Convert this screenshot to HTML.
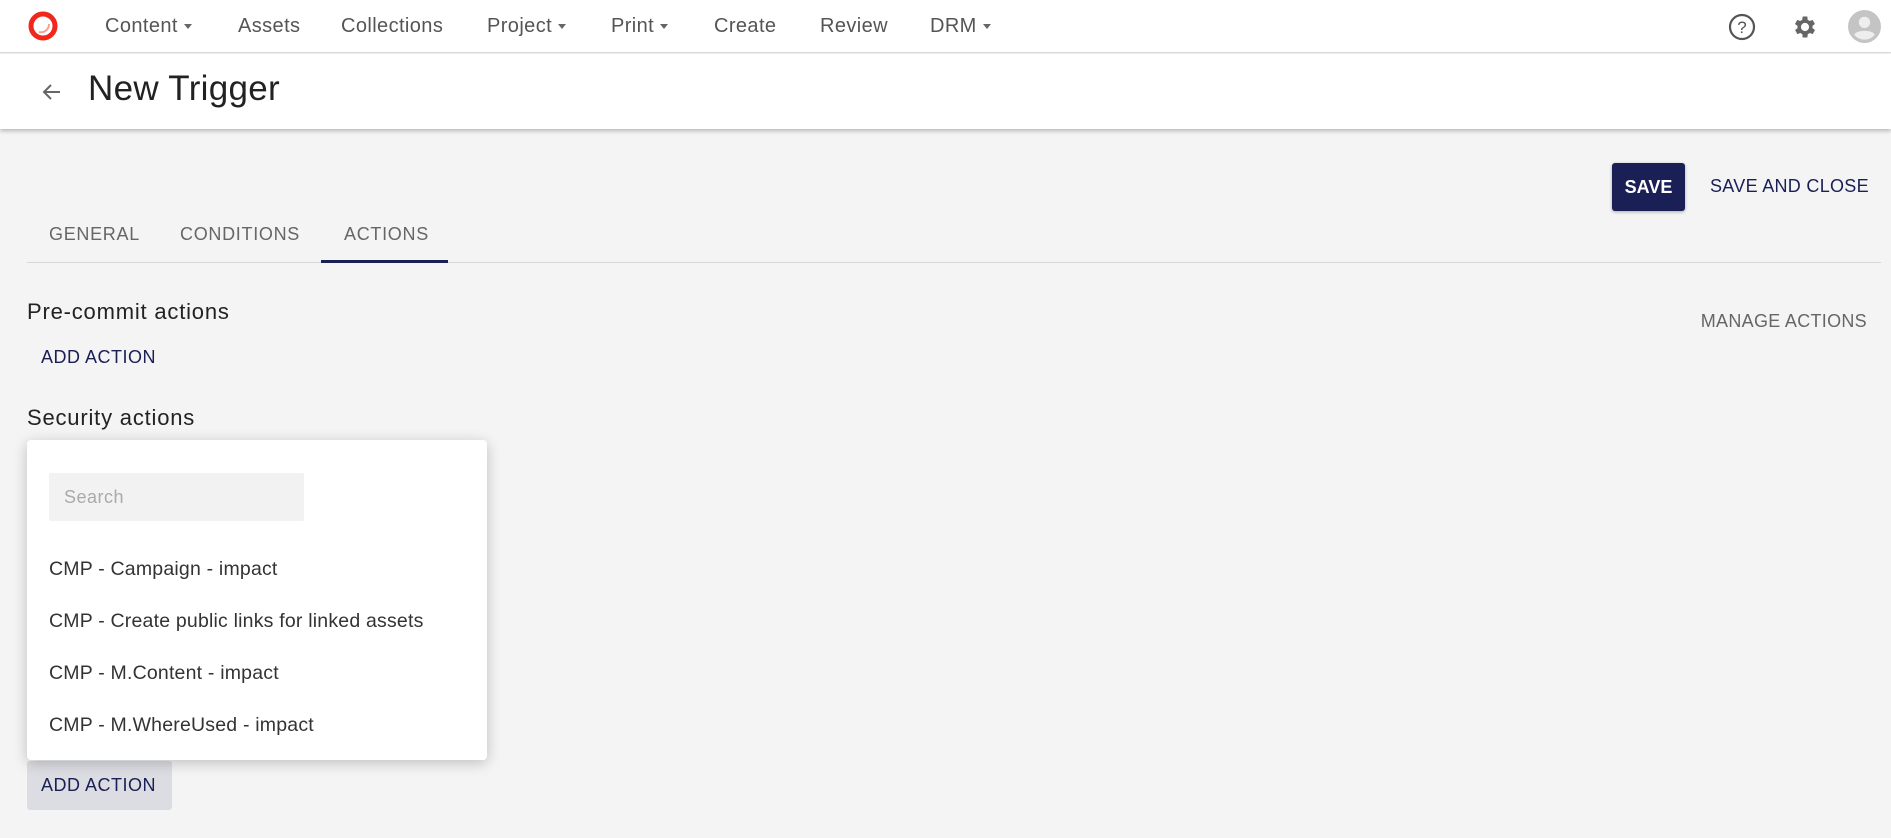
<!DOCTYPE html>
<html><head><meta charset="utf-8"><style>
*{box-sizing:border-box;margin:0;padding:0}
body{width:1891px;height:838px;background:#f4f4f4;font-family:"Liberation Sans",sans-serif;position:relative;overflow:hidden}
.abs{position:absolute;white-space:nowrap}
.nav{position:absolute;left:0;top:0;width:1891px;height:53px;background:#fff;border-bottom:1px solid #dcdcdc}
.nav .it{position:absolute;top:15px;font-size:20px;color:#555;letter-spacing:.4px}
.caret{display:inline-block;width:0;height:0;border-left:4px solid transparent;border-right:4px solid transparent;border-top:5px solid #666;margin-left:6px;vertical-align:middle}
.hdr{position:absolute;left:0;top:54px;width:1891px;height:75px;background:#fff;box-shadow:0 2px 4px rgba(0,0,0,.25)}
.navy{color:#1a1f55}
.tab{position:absolute;top:224px;font-size:18px;color:#666;letter-spacing:.7px}
.dd{position:absolute;left:27px;top:440px;width:460px;height:320px;background:#fff;border-radius:4px;box-shadow:0 3px 14px rgba(0,0,0,.22)}
.item{position:absolute;left:22px;font-size:19.5px;color:#333;letter-spacing:.2px}
.h2{position:absolute;left:27px;font-size:22px;color:#222;letter-spacing:.8px}
</style></head><body>
<div class="nav">
<svg class="abs" style="left:27px;top:10px" width="32" height="32" viewBox="0 0 32 32"><circle cx="16" cy="16" r="12" fill="none" stroke="#f2271b" stroke-width="5"/><path d="M12 22a8 8 0 0 0 10-8" stroke="#f7a09a" stroke-width="2" fill="none"/></svg>
<div class="it" style="left:105px">Content<span class="caret"></span></div>
<div class="it" style="left:238px">Assets</div>
<div class="it" style="left:341px">Collections</div>
<div class="it" style="left:487px">Project<span class="caret"></span></div>
<div class="it" style="left:611px">Print<span class="caret"></span></div>
<div class="it" style="left:714px">Create</div>
<div class="it" style="left:820px">Review</div>
<div class="it" style="left:930px">DRM<span class="caret"></span></div>
<svg class="abs" style="left:1728px;top:13px" width="28" height="28" viewBox="0 0 28 28"><circle cx="14" cy="14" r="12" fill="none" stroke="#555" stroke-width="2.2"/><text x="14" y="20" font-size="17" text-anchor="middle" fill="#555" font-family="Liberation Sans">?</text></svg>
<svg class="abs" style="left:1791px;top:13px" width="28" height="28" viewBox="0 0 24 24"><path fill="#666" d="M19.4 13a7.5 7.5 0 0 0 0-2l2.1-1.6-2-3.5-2.5 1a7 7 0 0 0-1.7-1L15 3h-4l-.4 2.9a7 7 0 0 0-1.7 1l-2.5-1-2 3.5L6.6 11a7.5 7.5 0 0 0 0 2l-2.1 1.6 2 3.5 2.5-1a7 7 0 0 0 1.7 1L11 21h4l.4-2.9a7 7 0 0 0 1.7-1l2.5 1 2-3.5zM13 15.5a3.5 3.5 0 1 1 0-7 3.5 3.5 0 0 1 0 7z" transform="translate(-1 0)"/></svg>
<svg class="abs" style="left:1848px;top:10px" width="33" height="33" viewBox="0 0 32 32"><circle cx="16" cy="16" r="16" fill="#c4c4c4"/><circle cx="16" cy="12" r="5.5" fill="#eee"/><path d="M6 24c2-5 18-5 20 0a13 13 0 0 1-20 0z" fill="#eee"/></svg>
</div>
<div class="hdr">
<svg class="abs" style="left:40px;top:26px" width="24" height="24" viewBox="0 0 24 24"><path d="M20 12H5M11 5l-7 7 7 7" stroke="#666" stroke-width="2" fill="none"/></svg>
<div class="abs" style="left:88px;top:15px;font-size:35px;color:#222;letter-spacing:.3px">New Trigger</div>
</div>
<div class="abs" style="left:1612px;top:163px;width:73px;height:48px;background:#1a1f55;border-radius:3px;box-shadow:0 1px 3px rgba(0,0,0,.3);color:#fff;font-size:18px;font-weight:bold;text-align:center;line-height:48px">SAVE</div>
<div class="abs navy" style="left:1710px;top:176px;font-size:18px;letter-spacing:.3px">SAVE AND CLOSE</div>
<div class="tab" style="left:49px">GENERAL</div>
<div class="tab" style="left:180px">CONDITIONS</div>
<div class="tab navy" style="left:344px">ACTIONS</div>
<div class="abs" style="left:27px;top:262px;width:1854px;height:1px;background:#d8d8d8"></div>
<div class="abs" style="left:321px;top:260px;width:127px;height:3px;background:#1a1f55"></div>
<div class="h2" style="top:299px">Pre-commit actions</div>
<div class="abs" style="right:24px;top:311px;font-size:18px;color:#666;letter-spacing:.3px">MANAGE ACTIONS</div>
<div class="abs navy" style="left:41px;top:347px;font-size:18px;letter-spacing:.5px">ADD ACTION</div>
<div class="h2" style="top:405px">Security actions</div>
<div class="abs" style="left:27px;top:761px;width:145px;height:49px;background:#dcdde3;border-radius:3px;color:#1a1f55;font-size:18px;line-height:49px;padding-left:14px;letter-spacing:.5px">ADD ACTION</div>
<div class="dd">
<div class="abs" style="left:22px;top:33px;width:255px;height:48px;background:#f2f2f2;border-radius:2px;font-size:18px;color:#aaa;line-height:48px;padding-left:15px;letter-spacing:.5px">Search</div>
<div class="item" style="top:118px">CMP - Campaign - impact</div>
<div class="item" style="top:170px">CMP - Create public links for linked assets</div>
<div class="item" style="top:222px">CMP - M.Content - impact</div>
<div class="item" style="top:274px">CMP - M.WhereUsed - impact</div>
</div>
</body></html>
